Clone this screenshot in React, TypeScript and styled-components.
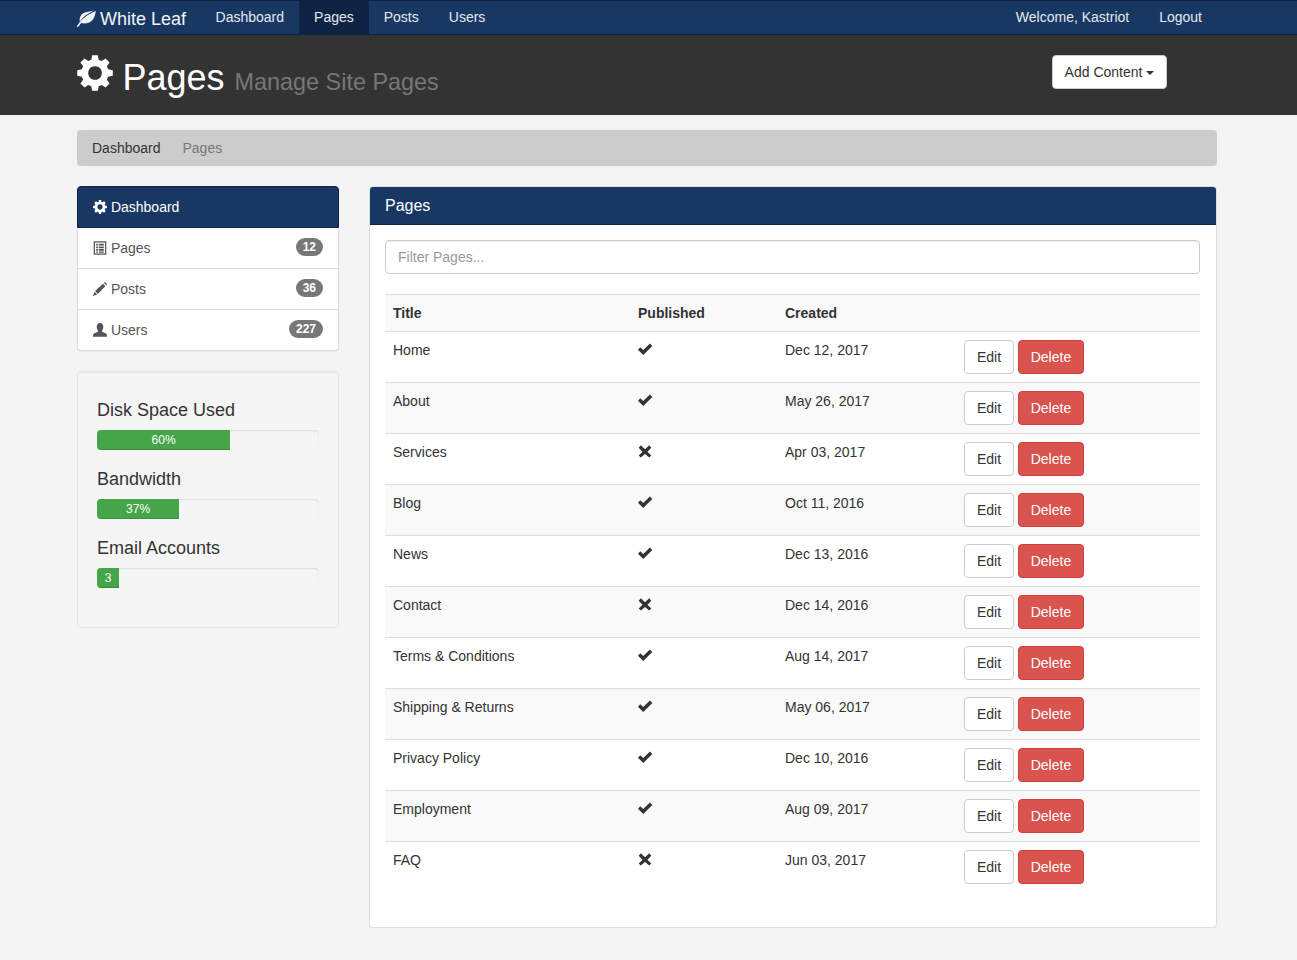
import * as React from "react";
import styled, { createGlobalStyle } from "styled-components";

const navy = "#193763";
const navyDark = "#0f2442";

const GlobalStyle = createGlobalStyle`
	* {
		box-sizing: border-box;
	}
	html, body {
		margin: 0;
		padding: 0;
	}
	body {
		background: #f4f4f4;
		color: #333;
		font-family: "Liberation Sans", Arial, sans-serif;
		font-size: 14px;
		line-height: 20px;
	}
	a {
		text-decoration: none;
		color: inherit;
	}
`;

const gearPath = (() => {
	const outer = 10;
	const root = 7.6;
	const points: string[] = [];
	for (let i = 0; i < 8; i++) {
		const mid = (i * Math.PI) / 4 - Math.PI / 2;
		[
			[root, -0.27],
			[outer, -0.16],
			[outer, 0.16],
			[root, 0.27],
		].forEach(([r, d]) => {
			const a = mid + d;
			points.push(`${(10 + r * Math.cos(a)).toFixed(2)} ${(10 + r * Math.sin(a)).toFixed(2)}`);
		});
	}
	return `M${points.join("L")}Z M10 6.2a3.8 3.8 0 1 0 .01 0Z`;
})();

const iconPaths: Record<string, string> = {
	cog: gearPath,
	leaf: "M19.2 1.7C14.7 3.5 8 2.3 4.6 6.9C2.9 9.2 2.6 11.500 3.1 13.8C6.3 9.2 11.3 5.2 19.2 1.7Z M20.8 2.3C20.3 7.500 18.6 12.7 13.6 15C10.2 16.4 6.8 16.1 4.6 15.500L1.2 20.1L-.4 19.500C4.6 11.500 11.3 6.3 20.8 2.3Z",
	list: "M1 .5h18v19H1Z M2.800 2.300v15.400h14.400V2.300Z M4.500 4h2.500v2.500H4.500Z M8.200 4h7.300v2.500H8.200Z M4.500 7.800h2.500v2.500H4.500Z M8.200 7.800h7.300v2.500H8.200Z M4.500 11.600h2.500v2.500H4.500Z M8.200 11.600h7.300v2.500H8.200Z M4.500 15h2.500v1.700H4.500Z M8.200 15h7.300v1.700H8.200Z",
	pencil: "M14.200 2.500L17.800 5.800L7 17L3 13Z M2.300 14L6 17.700L-.3 20Z M15.500 1.200L17 0L20.300 3.200L19 4.800Z",
	user: "M10 0C13.500 0 14.700 3 14.700 5.500C14.700 8.500 13.500 10 13 11L13 12.500L18.500 15C20 15.800 20 17.500 20 19.500L0 19.500C0 17.500 0 15.800 1.500 15L7 12.500L7 11C6.500 10 5.300 8.500 5.300 5.500C5.300 3 6.500 0 10 0Z",
	ok: "M0 9.500L3.200 6.200L7.400 10L17 .8L20.500 4.300L7.500 17Z",
	remove: "M4 .5L10 6L16 .5L19 4L13.500 9.500L19 15L16 18L10 13L4 18L1 15L6.500 9.500L1 4Z",
};

const Svg = styled.svg`
	display: inline-block;
	width: 1em;
	height: 1em;
	overflow: visible;
	vertical-align: -0.12em;
	fill: currentColor;
`;

const Icon = ({ name }: { name: string }) => (
	<Svg viewBox="0 0 20 20" aria-hidden="true">
		<path fillRule="evenodd" d={iconPaths[name]} />
	</Svg>
);

const Navbar = styled.nav`
	display: flex;
	justify-content: space-between;
	height: 35px;
	padding: 0 80px 0 62px;
	background: ${navy};
	border-top: 1px solid ${navyDark};
	border-bottom: 1px solid ${navyDark};
`;

const NavGroup = styled.div`
	display: flex;
`;

const Brand = styled.a`
	padding: 8px 14.5px 5px 15px;
	color: #f1f4f8;
	font-size: 18px;
	white-space: nowrap;
`;

const NavLink = styled.a<{ $active?: boolean }>`
	padding: 6px 15px 7px;
	color: #e4e9f0;
	background: ${(props) => (props.$active ? navyDark : "transparent")};
`;

const PageHeader = styled.header`
	display: flex;
	justify-content: space-between;
	align-items: flex-start;
	height: 80px;
	padding: 20px 130px 0 77px;
	background: #333;
`;

const Title = styled.h1`
	margin: 0;
	color: #fff;
	font-size: 36px;
	font-weight: 500;
	line-height: 39.6px;
	svg {
		margin-right: -0.5px;
		vertical-align: -0.04em;
	}
	small {
		color: #777;
		font-size: 65%;
		font-weight: 400;
		line-height: 1;
	}
`;

const Button = styled.button<{ $danger?: boolean }>`
	height: 34px;
	padding: 6px ${(props) => (props.$danger ? "11.6px" : "12px")};
	border: 1px solid ${(props) => (props.$danger ? "#d43f3a" : "#ccc")};
	border-radius: 4px;
	background: ${(props) => (props.$danger ? "#d9534f" : "#fff")};
	color: ${(props) => (props.$danger ? "#fff" : "#333")};
	font: inherit;
`;

const AddButton = styled(Button)`
	padding: 6px 11.7px;
`;

const Caret = styled.span`
	display: inline-block;
	width: 0;
	height: 0;
	vertical-align: middle;
	border-top: 4px solid;
	border-right: 4px solid transparent;
	border-left: 4px solid transparent;
`;

const Content = styled.main`
	width: 1140px;
	margin: 15px 0 0 77px;
`;

const Breadcrumb = styled.ol`
	display: flex;
	gap: 22px;
	height: 36px;
	margin: 0 0 20px;
	padding: 8px 15px;
	list-style: none;
	background: #ccc;
	border-radius: 4px;
`;

const Crumb = styled.li<{ $active?: boolean }>`
	color: ${(props) => (props.$active ? "#777" : "#333")};
`;

const Columns = styled.div`
	display: grid;
	grid-template-columns: 262px 848px;
	column-gap: 30px;
	align-items: start;
`;

const SideMenu = styled.div`
	margin-bottom: 20px;
	background: #fff;
	border: 1px solid #ddd;
	border-top: 0;
	border-radius: 4px;
	box-shadow: 0 1px 1px rgba(0, 0, 0, 0.05);
`;

const MenuHead = styled.a`
	display: block;
	height: 42px;
	margin: 0 -1px;
	padding: 10px 15px;
	color: #fff;
	background: ${navy};
	border: 1px solid ${navyDark};
	border-radius: 4px 4px 0 0;
`;

const MenuItem = styled.a`
	display: flex;
	justify-content: space-between;
	height: 40px;
	padding: 10px 15px;
	color: #555;
	& + & {
		height: 41px;
		border-top: 1px solid #ddd;
	}
`;

const Badge = styled.span`
	height: 18px;
	padding: 3px 7px;
	border-radius: 10px;
	background: #777;
	color: #fff;
	font-size: 12px;
	font-weight: 700;
	line-height: 12px;
`;

const Well = styled.div`
	padding: 19px;
	background: #f5f5f5;
	border: 1px solid #e3e3e3;
	border-radius: 4px;
	box-shadow: inset 0 1px 1px rgba(0, 0, 0, 0.05);
`;

const MeterLabel = styled.h4`
	margin: 20px 0 10px;
	font-size: 18px;
	font-weight: 500;
	line-height: 19px;
	&:first-child {
		margin-top: 10px;
	}
`;

const Track = styled.div`
	height: 20px;
	margin-bottom: 20px;
	overflow: hidden;
	background: #f5f5f5;
	border-radius: 4px;
	box-shadow: inset 0 1px 2px rgba(0, 0, 0, 0.1);
`;

const Fill = styled.div<{ $value: number }>`
	width: ${(props) => props.$value}%;
	height: 100%;
	background: #44a648;
	color: #fff;
	font-size: 12px;
	line-height: 20px;
	text-align: center;
	box-shadow: inset 0 -1px 0 rgba(0, 0, 0, 0.15);
`;

const Panel = styled.section`
	height: 742px;
	background: #fff;
	border: 1px solid #ddd;
	border-radius: 4px;
	box-shadow: 0 1px 1px rgba(0, 0, 0, 0.05);
`;

const PanelHead = styled.h3`
	height: 38px;
	margin: 0;
	padding: 9px 15px;
	background: ${navy};
	border-bottom: 1px solid ${navyDark};
	border-radius: 3px 3px 0 0;
	color: #fff;
	font-size: 16px;
	font-weight: 500;
	line-height: 20px;
`;

const PanelBody = styled.div`
	padding: 15px 16px 15px 15px;
`;

const Filter = styled.input`
	display: block;
	width: 100%;
	height: 34px;
	margin-bottom: 20px;
	padding: 6px 12px;
	border: 1px solid #ccc;
	border-radius: 4px;
	box-shadow: inset 0 1px 1px rgba(0, 0, 0, 0.075);
	color: #555;
	font: inherit;
	&::placeholder {
		color: #999;
		opacity: 1;
	}
`;

const Table = styled.table`
	width: 100%;
	table-layout: fixed;
	border-collapse: collapse;
	th, td {
		padding: 8px;
		border-top: 1px solid #ddd;
		text-align: left;
		vertical-align: top;
	}
	thead tr,
	tbody tr:nth-child(even) {
		background: #f9f9f9;
	}
`;

const HeadCell = styled.th<{ $width: number }>`
	width: ${(props) => props.$width}px;
`;

const Actions = styled.td`
	button + button {
		margin-left: 4px;
	}
`;

const meters = [
	{ label: "Disk Space Used", value: 60, text: "60%" },
	{ label: "Bandwidth", value: 37, text: "37%" },
	{ label: "Email Accounts", value: 10, text: "3" },
];

const pages = [
	{ title: "Home", ok: true, created: "Dec 12, 2017" },
	{ title: "About", ok: true, created: "May 26, 2017" },
	{ title: "Services", ok: false, created: "Apr 03, 2017" },
	{ title: "Blog", ok: true, created: "Oct 11, 2016" },
	{ title: "News", ok: true, created: "Dec 13, 2016" },
	{ title: "Contact", ok: false, created: "Dec 14, 2016" },
	{ title: "Terms & Conditions", ok: true, created: "Aug 14, 2017" },
	{ title: "Shipping & Returns", ok: true, created: "May 06, 2017" },
	{ title: "Privacy Policy", ok: true, created: "Dec 10, 2016" },
	{ title: "Employment", ok: true, created: "Aug 09, 2017" },
	{ title: "FAQ", ok: false, created: "Jun 03, 2017" },
];

export default function App() {
	return (
		<>
			<GlobalStyle />
			<Navbar>
				<NavGroup>
					<Brand href="#">
						<Icon name="leaf" /> White Leaf
					</Brand>
					<NavLink href="#">Dashboard</NavLink>
					<NavLink href="#" $active>
						Pages
					</NavLink>
					<NavLink href="#">Posts</NavLink>
					<NavLink href="#">Users</NavLink>
				</NavGroup>
				<NavGroup>
					<NavLink href="#">Welcome, Kastriot</NavLink>
					<NavLink href="#">Logout</NavLink>
				</NavGroup>
			</Navbar>
			<PageHeader>
				<Title>
					<Icon name="cog" /> Pages <small>Manage Site Pages</small>
				</Title>
				<AddButton>
					Add Content <Caret />
				</AddButton>
			</PageHeader>
			<Content>
				<Breadcrumb>
					<Crumb>Dashboard</Crumb>
					<Crumb $active>Pages</Crumb>
				</Breadcrumb>
				<Columns>
					<aside>
						<SideMenu>
							<MenuHead href="#">
								<Icon name="cog" /> Dashboard
							</MenuHead>
							<MenuItem href="#">
								<span>
									<Icon name="list" /> Pages
								</span>
								<Badge>12</Badge>
							</MenuItem>
							<MenuItem href="#">
								<span>
									<Icon name="pencil" /> Posts
								</span>
								<Badge>36</Badge>
							</MenuItem>
							<MenuItem href="#">
								<span>
									<Icon name="user" /> Users
								</span>
								<Badge>227</Badge>
							</MenuItem>
						</SideMenu>
						<Well>
							{meters.map((m) => (
								<React.Fragment key={m.label}>
									<MeterLabel>{m.label}</MeterLabel>
									<Track>
										<Fill $value={m.value}>{m.text}</Fill>
									</Track>
								</React.Fragment>
							))}
						</Well>
					</aside>
					<Panel>
						<PanelHead>Pages</PanelHead>
						<PanelBody>
							<Filter type="text" placeholder="Filter Pages..." />
							<Table>
								<thead>
									<tr>
										<HeadCell $width={245}>Title</HeadCell>
										<HeadCell $width={147}>Published</HeadCell>
										<HeadCell $width={179}>Created</HeadCell>
										<HeadCell $width={244} />
									</tr>
								</thead>
								<tbody>
									{pages.map((p) => (
										<tr key={p.title}>
											<td>{p.title}</td>
											<td>
												<Icon name={p.ok ? "ok" : "remove"} />
											</td>
											<td>{p.created}</td>
											<Actions>
												<Button>Edit</Button>
												<Button $danger>Delete</Button>
											</Actions>
										</tr>
									))}
								</tbody>
							</Table>
						</PanelBody>
					</Panel>
				</Columns>
			</Content>
		</>
	);
}
